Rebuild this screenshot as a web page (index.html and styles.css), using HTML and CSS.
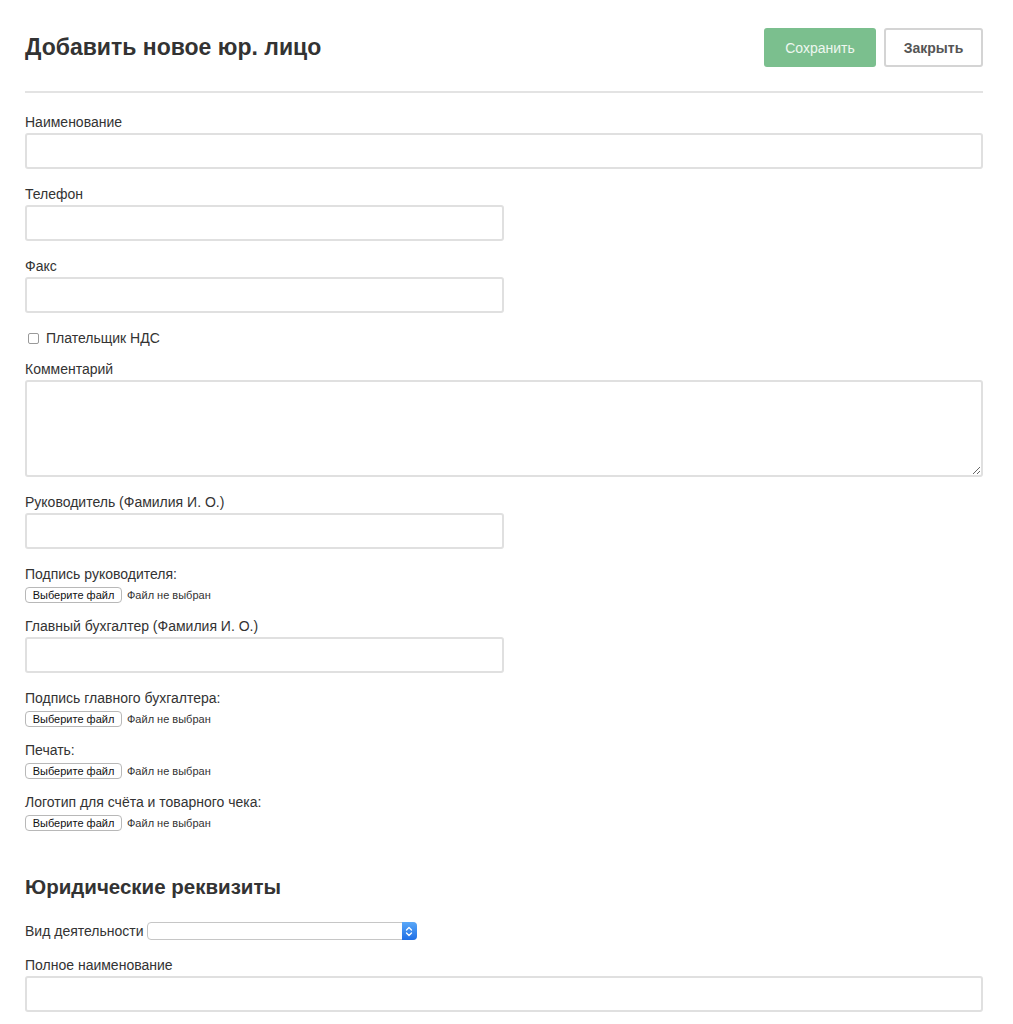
FILE: index.html
```html
<!DOCTYPE html>
<html lang="ru">
<head>
    <meta charset="UTF-8">
    <title>Добавить новое юр. лицо</title>
    <link rel="stylesheet" href="styles.css">
</head>
<body>
    <div class="page">
        <div class="header">
            <h1>Добавить новое юр. лицо</h1>
            <div class="header-buttons">
                <button class="btn btn-save">Сохранить</button>
                <button class="btn btn-close">Закрыть</button>
            </div>
        </div>

        <hr class="divider">

        <div class="field">
            <label for="name">Наименование</label>
            <input type="text" id="name" class="input input-wide">
        </div>

        <div class="field">
            <label for="phone">Телефон</label>
            <input type="text" id="phone" class="input input-half">
        </div>

        <div class="field">
            <label for="fax">Факс</label>
            <input type="text" id="fax" class="input input-half">
        </div>

        <div class="check-row">
            <span class="check-box"></span>
            <span>Плательщик НДС</span>
        </div>

        <div class="field">
            <label for="comment">Комментарий</label>
            <textarea id="comment" class="input input-wide textarea"></textarea>
        </div>

        <div class="field">
            <label for="director">Руководитель (Фамилия И. О.)</label>
            <input type="text" id="director" class="input input-half">
        </div>

        <div class="field field-file">
            <label>Подпись руководителя:</label>
            <div class="file-row">
                <span class="file-button">Выберите файл</span>
                <span class="file-name">Файл не выбран</span>
            </div>
        </div>

        <div class="field">
            <label for="accountant">Главный бухгалтер (Фамилия И. О.)</label>
            <input type="text" id="accountant" class="input input-half">
        </div>

        <div class="field field-file">
            <label>Подпись главного бухгалтера:</label>
            <div class="file-row">
                <span class="file-button">Выберите файл</span>
                <span class="file-name">Файл не выбран</span>
            </div>
        </div>

        <div class="field field-file">
            <label>Печать:</label>
            <div class="file-row">
                <span class="file-button">Выберите файл</span>
                <span class="file-name">Файл не выбран</span>
            </div>
        </div>

        <div class="field field-file">
            <label>Логотип для счёта и товарного чека:</label>
            <div class="file-row">
                <span class="file-button">Выберите файл</span>
                <span class="file-name">Файл не выбран</span>
            </div>
        </div>

        <h2>Юридические реквизиты</h2>

        <div class="inline-row">
            <span>Вид деятельности</span>
            <div class="select">
                <span class="select-arrow">
                    <svg width="8" height="11" viewBox="0 0 8 11">
                        <path d="M1.5 4 L4 1.5 L6.5 4 M1.5 7 L4 9.5 L6.5 7" fill="none" stroke="#fff" stroke-width="1.3" stroke-linecap="round" stroke-linejoin="round"/>
                    </svg>
                </span>
            </div>
        </div>

        <div class="field">
            <label for="fullname">Полное наименование</label>
            <input type="text" id="fullname" class="input input-wide">
        </div>
    </div>
</body>
</html>
```

FILE: styles.css
```css
body {
    margin: 0;
    font-family: "Liberation Sans", Arial, sans-serif;
    font-size: 14px;
    color: #333;
    background-color: #fff;
}

.page {
    width: 958px;
    margin-left: 25px;
}

.header {
    display: flex;
    justify-content: space-between;
    align-items: center;
    padding-top: 28px;
}

h1 {
    margin: 0;
    font-size: 23px;
    font-weight: bold;
    color: #333;
}

.header-buttons {
    display: flex;
    gap: 8px;
}

.btn {
    height: 39px;
    font-family: "Liberation Sans", Arial, sans-serif;
    font-size: 14px;
    border-radius: 3px;
    cursor: pointer;
}

.btn-save {
    width: 112px;
    background-color: #7bbf8e;
    color: #eef7f0;
    border: none;
}

.btn-close {
    width: 99px;
    background-color: #fff;
    color: #555;
    font-weight: bold;
    border: 2px solid #d4d4d4;
}

.divider {
    margin: 24px 0 19px;
    border: none;
    border-top: 2px solid #e3e3e3;
}

.field {
    margin-bottom: 15px;
}

.field-file {
    margin-bottom: 13px;
}

.field label {
    display: block;
    line-height: 20px;
    margin-bottom: 1px;
}

.input {
    display: block;
    box-sizing: border-box;
    height: 36px;
    border: 2px solid #e0e0e0;
    border-radius: 3px;
    background-color: #fff;
    margin: 0;
    font-family: "Liberation Sans", Arial, sans-serif;
    font-size: 14px;
}

.input-wide {
    width: 958px;
}

.input-half {
    width: 479px;
}

.textarea {
    height: 97px;
    resize: vertical;
}

.check-row {
    display: flex;
    align-items: center;
    height: 20px;
    margin-bottom: 11px;
    gap: 7px;
    padding-left: 3px;
}

.check-box {
    width: 9px;
    height: 9px;
    border: 1px solid #9a9a9a;
    border-radius: 2px;
    background-color: #fff;
}

.file-row {
    display: flex;
    align-items: center;
    gap: 5px;
    height: 16px;
    margin-top: 3px;
}

.file-button {
    box-sizing: border-box;
    width: 97px;
    height: 16px;
    border: 1px solid #b8b8b8;
    border-radius: 4px;
    background-color: #fff;
    font-size: 11px;
    line-height: 14px;
    text-align: center;
    color: #111;
}

.file-name {
    font-size: 11px;
    color: #333;
}

h2 {
    margin: 44px 0 22px;
    font-size: 20.5px;
    line-height: 24px;
    font-weight: bold;
    color: #333;
}

.inline-row {
    display: flex;
    align-items: center;
    gap: 3px;
    height: 20px;
    margin-bottom: 14px;
}

.select {
    position: relative;
    box-sizing: border-box;
    width: 270px;
    height: 18px;
    border: 1px solid #c6c6c6;
    border-radius: 4px;
    background-color: #fff;
}

.select-arrow {
    position: absolute;
    top: -1px;
    right: -1px;
    width: 15px;
    height: 18px;
    display: flex;
    align-items: center;
    justify-content: center;
    border-radius: 0 4px 4px 0;
    background: linear-gradient(#5aa8f8, #1f6fe6);
}
```
